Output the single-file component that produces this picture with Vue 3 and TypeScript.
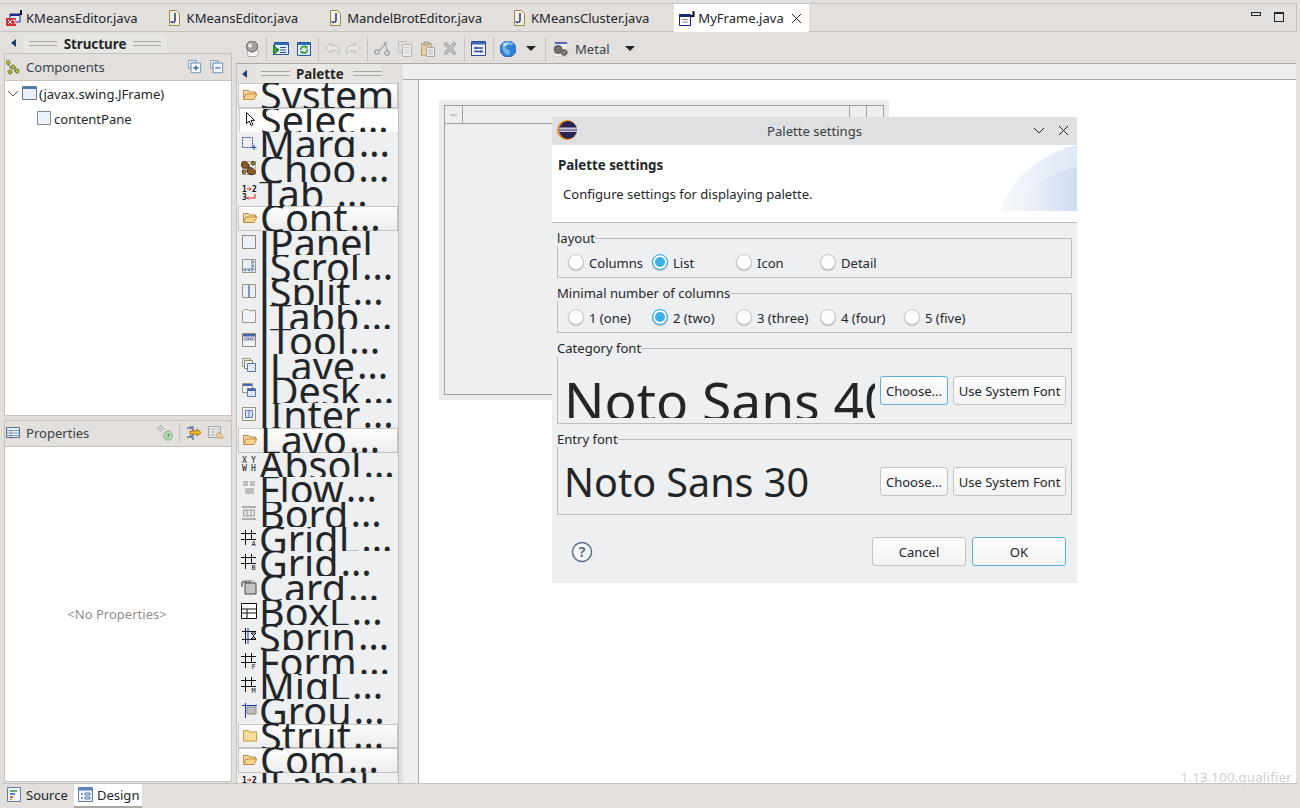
<script setup lang="ts">
import { h } from 'vue'
import type { FunctionalComponent } from 'vue'

type Shape = { d?: string; f?: string; s?: string; w?: number; dash?: string; t?: string; x?: number; y?: number; z?: number; b?: boolean }

const icons: Record<string, Shape[]> = {
  folderOpen: [
    { d: 'M1.5 12V4.5h5l1 1.5h6v2', f: '#f3d9a4', s: '#c08a3a' },
    { d: 'M4 8h11l-3 5.5H1.5z', f: '#fbd48c', s: '#c08a3a' },
  ],
  folder: [{ d: 'M1.5 3.5h5l1 1.5h7v9h-13z', f: '#fcdc98', s: '#c8973f' }],
  arrow: [{ d: 'M4.5 1.5v11l2.7-2.4 2 4.4 1.8-.8-2-4.3h3.5z', f: '#fff', s: '#111' }],
  marquee: [
    { d: 'M1.5 2.5h10v10h-10z', f: 'none', s: '#2848a8', dash: '2 1' },
    { d: 'M13 10v5M10.5 12.5h5', f: 'none', s: '#2848a8' },
  ],
  chooser: [
    { d: 'M1.5 1.5h13v13h-13z', f: '#eee', s: '#a8a88a' },
    { d: 'M0 5c0-3 3-4 5-3s4 3 3 5-7 2-8-2z', f: '#8a5a22', s: '#33230f' },
    { d: 'M6 11c0-3 3-4 5-3s4 3 3 5-7 3-8-2z', f: '#8a5a22', s: '#33230f' },
    { d: 'M12 1.500a1.800 1.800 0 1 0 .1 0zM3 10a1.800 1.800 0 1 0 .1 0z', f: '#b98a2f', s: '#33230f' },
  ],
  tab: [
    { t: '1', x: 1, y: 6.5, f: '#111', b: true },
    { t: '2', x: 11, y: 6.5, f: '#111', b: true },
    { t: '3', x: 1, y: 15, f: '#111', b: true },
    { d: 'M6 4h4M8.5 2.5 10 4 8.5 5.5', f: 'none', s: '#e01818' },
    { d: 'M14 9v4H6M7.5 11.5 6 13l1.5 1.5', f: 'none', s: '#e01818' },
  ],
  panel: [{ d: 'M1.5 1.5h13v13h-13z', f: '#e8eff8', s: '#8d8d7a' }],
  scroll: [
    { d: 'M1.5 1.5h13v13h-13z', f: '#e8eff8', s: '#9a9478' },
    { d: 'M11 2v12M2 11h12', f: 'none', s: '#5b78a8' },
    { d: 'M3 12h2v1H3zM7 12h2v1H7zM12 3h1v2h-1zM12 7h1v2h-1z', f: '#3f63b5' },
  ],
  split: [
    { d: 'M1.5 1.5h13v13h-13z', f: '#e8eff8', s: '#9a9478' },
    { d: 'M8 2v12', f: 'none', s: '#5b78a8', w: 1.5 },
  ],
  tabbed: [{ d: 'M1.5 14.5v-12h1l1-1h4l1 1h6v12z', f: '#eef3fa', s: '#a09a78' }],
  tool: [
    { d: 'M1.5 1.5h13v13h-13z', f: '#eef3fa', s: '#8f8a68' },
    { d: 'M2 2h12v2.5H2z', f: '#3f63b5' },
    { d: 'M2 5h12v4H2z', f: '#c4c6e4' },
    { d: 'M5 7h1M7 7h1M9 7h1M11 7h1', f: 'none', s: '#223' },
  ],
  layered: [
    { d: 'M1.5 1.5h8v8h-8z', f: '#eee', s: '#a09a78' },
    { d: 'M3.5 3.5h8v8h-8z', f: '#eef3fa', s: '#8f8a68' },
    { d: 'M6.5 6.5h8v8h-8z', f: '#dfe8f4', s: '#5b78a8' },
  ],
  desktop: [
    { d: 'M1.5 1.5h10v9h-10z', f: '#eef3fa', s: '#a09a78' },
    { d: 'M2 2h9v2H2z', f: '#3f63b5' },
    { d: 'M6.5 6.5h8v8h-8z', f: '#dfe8f4', s: '#5b78a8' },
    { d: 'M7 7h7v2H7z', f: '#3f63b5' },
  ],
  inter: [
    { d: 'M1.5 1.5h13v13h-13z', f: '#eef3fa', s: '#9a9478' },
    { d: 'M4.5 4.5h7v7h-7zM8 5v6', f: '#dfe8f4', s: '#5b78a8' },
  ],
  absolute: [
    { t: 'X', x: 1, y: 6.5, f: '#111' },
    { t: 'Y', x: 10, y: 6.5, f: '#111' },
    { t: 'W', x: 1, y: 15, f: '#111' },
    { t: 'H', x: 10, y: 15, f: '#111' },
  ],
  flow: [{ d: 'M2 1h5v5H2zM9 1h5v5H9zM4 8h9v6H4z', f: '#bcbcbc' }],
  border: [
    { d: 'M1 2h14M1 14h14', f: 'none', s: '#999', w: 1.5 },
    { d: 'M2.5 5h11v6h-11zM6 5v6M10 5v6', f: '#e6e6e6', s: '#999' },
  ],
  grid: [{ d: 'M4.5 0v15M10.5 0v10M0 3.5h15M0 9.5h15M4.5 15', f: 'none', s: '#111' }],
  card: [
    { d: 'M2.5 1.5h10v11', f: 'none', s: '#aaa' },
    { d: 'M1 8V3h9', f: 'none', s: '#222' },
    { d: 'M4 4h11v11H4z', f: '#c4c4c4', s: '#444' },
  ],
  box: [
    { d: 'M.5 .5h15v15H.5z', f: '#fff', s: '#111' },
    { d: 'M1 6h14M1 10h14M6 6v9', f: 'none', s: '#111' },
  ],
  spring: [
    { d: 'M1 3.5h14M1 11.5h14', f: 'none', s: '#111' },
    { d: 'M4.5 0v16', f: 'none', s: '#111' },
    { d: 'M7 0v16', f: 'none', s: '#1a2ee0' },
    { d: 'M10 5h5l-3 3 3 3h-5l3-3z', f: 'none', s: '#111' },
  ],
  group: [
    { d: 'M1 3.5h15M4.5 1v15', f: 'none', s: '#1a2ee0' },
    { d: 'M6 5h9v7H6z', f: '#bdbdbd', s: '#888' },
  ],
  frame: [
    { d: 'M.5 .5h14v13H.5z', f: '#e8f1fb', s: '#6f7c7d' },
    { d: 'M1 1h13v2H1z', f: '#3f7fc4' },
  ],
  pane: [{ d: 'M.5 .5h13v13H.5z', f: '#ecf2f8', s: '#7f8b95' }],
  java: [
    { d: 'M2.5 .5h7l3 3v12h-10z', f: '#f5f0e0', s: '#94894f' },
    { d: 'M8 3v7c0 3-4 3-4 1', f: 'none', s: '#203a9a', w: 1.5 },
  ],
  xjava: [
    { d: 'M4 4h10v8H4z', f: '#e8eef8', s: '#1a2d8c' },
    { d: 'M4 4h10v2H4z', f: '#1a2d8c' },
    { d: 'M15 5V1h2', f: 'none', s: '#111', w: 2 },
    { d: 'M0 8h10v8H0z', f: '#d83038' },
    { d: 'M2 10l2 2 2-2M2 14l2-2 2 2M7 10h2v4', f: 'none', s: '#fff' },
  ],
  mframe: [
    { d: 'M.5 4.5h11v11H.5z', f: '#fff', s: '#14237c' },
    { d: 'M1 5h10v2H1z', f: '#14237c' },
    { d: 'M3 9.5h6M3 12h6', f: 'none', s: '#888' },
    { d: 'M12 6h2.5V1', f: 'none', s: '#111', w: 2 },
  ],
  comps: [
    { d: 'M2 4l3 6M9 8v5', f: 'none', s: '#666' },
    { d: 'M2 1.5a2 2 0 1 0 .1 0zM7 6a2 2 0 1 0 .1 0zM11 10a2 2 0 1 0 .1 0zM4 11a2 2 0 1 0 .1 0z', f: '#c8b23a', s: '#5a7f2a' },
  ],
  expand: [
    { d: 'M.5 .5h9v3h-6v6h-3z', f: '#e4edf6', s: '#6f94b8' },
    { d: 'M3.5 3.5h11v11h-11z', f: '#f1f6fb', s: '#5f8ab2' },
    { d: 'M6 9h6M9 6v6', f: 'none', s: '#204e86', w: 1.2 },
  ],
  collapse: [
    { d: 'M.5 .5h9v3h-6v6h-3z', f: '#e4edf6', s: '#6f94b8' },
    { d: 'M3.5 3.5h11v11h-11z', f: '#f1f6fb', s: '#5f8ab2' },
    { d: 'M6 9h6', f: 'none', s: '#204e86', w: 1.2 },
  ],
  props: [
    { d: 'M.5 2.5h13v10H.5z', f: '#eef3f8', s: '#506e90' },
    { d: 'M1 5.5h12M1 8h12M1 10.500h12M5 5v7', f: 'none', s: '#7b95b0' },
  ],
  showcat: [
    { d: 'M1 1l5 5M3 0l4 4M0 3l4 4', f: 'none', s: '#98a4a8' },
    { d: 'M11 6a4.500 4.500 0 1 0 .1 0z', f: '#b5d6b5', s: '#86b58c' },
    { d: 'M13 9.500h-2v2h1', f: 'none', s: '#4c9a5c' },
  ],
  pin: [
    { d: 'M1 3h5l-2-2M1 12h5l-2-2', f: 'none', s: '#24447a' },
    { d: 'M7 1v14', f: 'none', s: '#24447a' },
    { d: 'M4 6h7V4l4 3.500-4 3.500V9H4z', f: '#f4c020', s: '#a06f10' },
  ],
  defaults: [
    { d: 'M.5 1.500h12v11H.5z', f: '#eaeaea', s: '#a8a8a8' },
    { d: 'M1 4h11M1 7h11M1 10h7M5 4v8', f: 'none', s: '#c0c0c0' },
    { d: 'M8 10l3-3v2c3 0 4 2 3 5-1-2-2-2-3-2v2z', f: '#f2d9a0', s: '#c8a868' },
  ],
  source: [
    { d: 'M.5 .5h13v14H.5z', f: '#f3f6fa', s: '#5f7fa8' },
    { d: 'M3 4h7', f: 'none', s: '#3d8f48', w: 1.5 },
    { d: 'M3 7h5', f: 'none', s: '#2a5fb0', w: 1.5 },
    { d: 'M3 10h3', f: 'none', s: '#c03030', w: 1.5 },
    { d: 'M3 12.500h2', f: 'none', s: '#d09020', w: 1.5 },
  ],
  design: [
    { d: 'M.5 .5h14v14H.5z', f: '#eff4fb', s: '#5f7fa8' },
    { d: 'M1 1h13v2.500H1z', f: '#5a82c8' },
    { d: 'M3 6h2v2H3zM3 10h2v2H3z', f: '#7a9ac8' },
    { d: 'M7 6h5v2H7zM7 10h5v2H7z', f: '#dbe6f5', s: '#5f7fa8' },
  ],
  tip: [
    { d: 'M3 8h10l1.500 4-2 3.500H4z', f: '#f4f4f0', s: '#b0b0a8' },
    { d: 'M8 0a5.500 5.500 0 1 0 .1 0z', f: '#a2a2a2', s: '#5c5c5c' },
    { d: 'M6 2.500a2 2 0 1 0 .1 0z', f: '#ececec' },
  ],
  testrun: [
    { d: 'M1.500 1.500h14v12h-14z', f: '#e6edf7', s: '#1f5a9e' },
    { d: 'M2 2h13v2H2z', f: '#2f6fb8' },
    { d: 'M7 6.500h6M7 9h6M7 11.500h6', f: 'none', s: '#1f5a9e' },
    { d: 'M0 4l6 5-6 5z', f: '#2f9a3c', s: '#1c6d28' },
  ],
  refresh: [
    { d: 'M1.500 1.500h13v13h-13z', f: '#e6edf7', s: '#1f5a9e' },
    { d: 'M2 2h12v2H2z', f: '#2f6fb8' },
    { d: 'M4.500 9a3.500 3.500 0 0 1 6-2.500M11.500 8.500a3.500 3.500 0 0 1-6 2.500', f: 'none', s: '#2f9a3c', w: 1.600 },
    { d: 'M11.500 4.500v3h-3zM4.500 13v-3h3z', f: '#2f9a3c' },
  ],
  undo: [{ d: 'M6 1.500 .5 7 6 12.500V9.500h3c3 0 4.500 1.500 5 3 1.500-4 0-8-5-8H6z', f: '#e8e6e4', s: '#bdbbb7' }],
  redo: [{ d: 'M10 1.500 15.500 7 10 12.500V9.500H7c-3 0-4.500 1.500-5 3-1.500-4 0-8 5-8h3z', f: '#e8e6e4', s: '#bdbbb7' }],
  cut: [
    { d: 'M13 1 5 10M10 1l4 9', f: 'none', s: '#a5a5a5', w: 1.200 },
    { d: 'M3 9a2.200 2.200 0 1 0 .1 0zM13 10a2.200 2.200 0 1 0 .1 0z', f: '#e2dfdc', s: '#a5a5a5', w: 1.400 },
  ],
  copy: [
    { d: 'M1.500 .5h8v11h-8z', f: '#dedede', s: '#c0c0c0' },
    { d: 'M5.500 3.500h9v12h-9z', f: '#ededed', s: '#b4b4b4' },
    { d: 'M7.500 6.500h5M7.500 9h5M7.500 11.500h5', f: 'none', s: '#c4c4c4' },
  ],
  paste: [
    { d: 'M1.500 2.500h10v12h-10z', f: '#e8cfa4', s: '#b8a27a' },
    { d: 'M4 1h5v3H4z', f: '#c8c4b8', s: '#a09a88' },
    { d: 'M6.500 6.500h8v9h-8z', f: '#eee', s: '#aaa' },
    { d: 'M8 9h5M8 11h5M8 13h5', f: 'none', s: '#bbb' },
  ],
  del: [{ d: 'M2 3l2-2 4 4 4-4 2 2-4 4.500 4 4.500-2 2-4-4-4 4-2-2 4-4.500z', f: '#bdbdbd', s: '#a8a8a8' }],
  form: [
    { d: 'M.5 .5h14v14H.5z', f: '#f1f5fb', s: '#294e97' },
    { d: 'M1 1h13v2.500H1z', f: '#3f63b5' },
    { d: 'M3 7h9M3 10.500h9', f: 'none', s: '#294e97', w: 1.400 },
    { d: 'M5 5.500v3M10 9v3', f: 'none', s: '#294e97' },
  ],
  globe: [
    { d: 'M8 0a8 8 0 1 0 .1 0z', f: '#2f7fd0', s: '#2a6cb5' },
    { d: 'M3 2c3-2 7-2 10 0 1 2-2 3-4 2S5 5 6 7s3 1 4 3-1 4-3 4C3 12 1 6 3 2z', f: '#6fb2ec' },
    { d: 'M4 3c1-1 3-1 4-.5S6 5 4.500 5 3 4 4 3z', f: '#d7ecfb' },
  ],
  look: [
    { d: 'M2.500 .5h13v15h-13z', f: '#eeeeee', s: '#d8d8d8' },
    { d: 'M3 1h12v2H3z', f: '#5a62b8' },
    { d: 'M6 5a3.500 3.500 0 1 0 .1 0z', f: '#777', s: '#666', w: 2 },
    { d: 'M12 9a2.500 2.500 0 1 0 .1 0z', f: '#888', s: '#6a6a6a', w: 2 },
  ],
}
;(['A', 'B', 'F', 'M'] as const).forEach((c) => {
  icons['grid' + c] = [...icons.grid, { t: c, x: 10.5, y: 16, f: '#111', z: 7 }]
})

const Ico: FunctionalComponent<{ n: string; size?: number }> = (props) =>
  h(
    'svg',
    { class: 'ico', width: props.size ?? 16, height: props.size ?? 16, viewBox: '0 0 16 16' },
    (icons[props.n] ?? []).map((p) =>
      p.t
        ? h('text', { x: p.x, y: p.y, fill: p.f, 'font-size': p.z ?? 8, 'font-family': 'DejaVu Sans Mono, monospace', 'font-weight': p.b ? 700 : 400 }, p.t)
        : h('path', { d: p.d, fill: p.f ?? 'none', stroke: p.s ?? 'none', 'stroke-width': p.w ?? 1, 'stroke-dasharray': p.dash }),
    ),
  )

const tabs = [
  { icon: 'xjava', text: 'KMeansEditor.java', cls: 't1' },
  { icon: 'java', text: 'KMeansEditor.java', cls: 't2' },
  { icon: 'java', text: 'MandelBrotEditor.java', cls: 't2' },
  { icon: 'java', text: 'KMeansCluster.java', cls: 't2' },
]

type Row = { icon: string; text: string; more?: boolean; cat?: boolean; sel?: boolean }
const rows: Row[] = [
  { icon: 'folderOpen', text: 'System', cat: true },
  { icon: 'arrow', text: 'Selec', more: true, sel: true },
  { icon: 'marquee', text: 'Marq', more: true },
  { icon: 'chooser', text: 'Choo', more: true },
  { icon: 'tab', text: 'Tab ', more: true },
  { icon: 'folderOpen', text: 'Cont', more: true, cat: true },
  { icon: 'panel', text: 'JPanel' },
  { icon: 'scroll', text: 'JScrol', more: true },
  { icon: 'split', text: 'JSplit', more: true },
  { icon: 'tabbed', text: 'JTabb', more: true },
  { icon: 'tool', text: 'JTool', more: true },
  { icon: 'layered', text: 'JLaye', more: true },
  { icon: 'desktop', text: 'JDesk', more: true },
  { icon: 'inter', text: 'JInter', more: true },
  { icon: 'folderOpen', text: 'Layo', more: true, cat: true },
  { icon: 'absolute', text: 'Absol', more: true },
  { icon: 'flow', text: 'Flow', more: true },
  { icon: 'border', text: 'Bord', more: true },
  { icon: 'gridA', text: 'GridL', more: true },
  { icon: 'gridB', text: 'Grid', more: true },
  { icon: 'card', text: 'Card', more: true },
  { icon: 'box', text: 'BoxL', more: true },
  { icon: 'spring', text: 'Sprin', more: true },
  { icon: 'gridF', text: 'Form', more: true },
  { icon: 'gridM', text: 'MigL', more: true },
  { icon: 'group', text: 'Grou', more: true },
  { icon: 'folder', text: 'Strut', more: true, cat: true },
  { icon: 'folderOpen', text: 'Com', more: true, cat: true },
  { icon: 'tab', text: 'JLabel' },
]

const layouts = [
  { label: 'Columns', on: false },
  { label: 'List', on: true },
  { label: 'Icon', on: false },
  { label: 'Detail', on: false },
]
const columns = [
  { label: '1 (one)', on: false },
  { label: '2 (two)', on: true },
  { label: '3 (three)', on: false },
  { label: '4 (four)', on: false },
  { label: '5 (five)', on: false },
]
</script>

<template>
  <div class="app">
    <div class="tabs">
      <div v-for="t in tabs" :key="t.text + t.cls" class="tab" :class="t.cls">
        <Ico :n="t.icon" />
        <span>{{ t.text }}</span>
      </div>
      <div class="tab active">
        <Ico n="mframe" />
        <span>MyFrame.java</span>
        <svg class="close" width="11" height="11" viewBox="0 0 11 11"><path d="M1 1l9 9M10 1l-9 9" stroke="#232629" fill="none" /></svg>
      </div>
      <div class="winbtns">
        <span class="minb"></span>
        <span class="maxb"></span>
      </div>
    </div>

    <div class="main">
      <aside class="left">
        <div class="phead">
          <span class="tri"></span>
          <div class="band sband">
            <span class="grip"></span>
            <b>Structure</b>
            <span class="grip"></span>
          </div>
        </div>
        <section class="view comps">
          <header class="vhead">
            <Ico n="comps" />
            <span class="vtitle">Components</span>
            <span class="vbtns">
              <Ico n="expand" :size="14" />
              <Ico n="collapse" :size="14" />
            </span>
          </header>
          <div class="tree">
            <div class="node">
              <svg class="chev" width="12" height="8" viewBox="0 0 12 8"><path d="M1 1l5 5 5-5" stroke="#555" fill="none" /></svg>
              <Ico n="frame" />
              <span>(javax.swing.JFrame)</span>
            </div>
            <div class="node sub">
              <Ico n="pane" />
              <span>contentPane</span>
            </div>
          </div>
        </section>
        <section class="view propsv">
          <header class="vhead">
            <Ico n="props" />
            <span class="vtitle">Properties</span>
            <span class="vbtns pbtns">
              <Ico n="showcat" />
              <i class="sep"></i>
              <Ico n="pin" />
              <Ico n="defaults" />
            </span>
          </header>
          <div class="noprops">&lt;No Properties&gt;</div>
        </section>
      </aside>

      <div class="right">
        <div class="toolbar">
          <Ico n="tip" class="tb first" />
          <i class="tsep"></i>
          <Ico n="testrun" class="tb" />
          <Ico n="refresh" class="tb g7" />
          <i class="tsep"></i>
          <Ico n="undo" class="tb" />
          <Ico n="redo" class="tb g4" />
          <i class="tsep"></i>
          <Ico n="cut" class="tb" />
          <Ico n="copy" class="tb g7" />
          <Ico n="paste" class="tb g7" />
          <Ico n="del" class="tb g6" />
          <i class="tsep"></i>
          <Ico n="form" class="tb" />
          <i class="tsep s2"></i>
          <Ico n="globe" class="tb" />
          <i class="drop"></i>
          <i class="tsep s3"></i>
          <Ico n="look" class="tb" />
          <span class="metal">Metal</span>
          <i class="drop d2"></i>
        </div>

        <div class="work">
          <div class="palette">
            <div class="phead pal">
              <span class="tri"></span>
              <div class="band pband">
                <span class="grip"></span>
                <b>Palette</b>
                <span class="grip"></span>
              </div>
            </div>
            <div class="plist">
              <div v-for="r in rows" :key="r.text + r.icon" class="prow" :class="{ cat: r.cat, sel: r.sel }">
                <Ico :n="r.icon" class="picon" />
                <span class="ptext">{{ r.text }}<span v-if="r.more" class="dots">…</span></span>
              </div>
            </div>
          </div>
          <div class="editor">
            <div class="rtop"></div>
            <div class="erow">
              <div class="rleft"></div>
              <div class="canvas">
                <div class="jframe">
                  <div class="jinner">
                    <div class="jtitle">
                      <span class="jmin"><i></i></span>
                      <span class="jfill"></span>
                      <span class="jbtn"></span>
                      <span class="jbtn"></span>
                    </div>
                  </div>
                </div>
                <span class="version">1.13.100.qualifier</span>
              </div>
            </div>
          </div>
        </div>
      </div>
    </div>

    <div class="bottom">
      <div class="btab">
        <Ico n="source" />
        <span>Source</span>
      </div>
      <div class="btab on">
        <Ico n="design" />
        <span>Design</span>
      </div>
    </div>

    <div class="dialog">
      <div class="dtitle">
        <svg class="dlogo" width="22" height="22" viewBox="0 0 22 22">
          <circle cx="11" cy="11" r="10" fill="#f29111" />
          <circle cx="12" cy="11" r="9" fill="#2c2255" />
          <path d="M3 8.500h18v1.500H3zM3 11.500h18v1.500H3z" fill="#c8c6dc" />
          <path d="M3.500 10h17v1.500h-17z" fill="#8c88b0" />
        </svg>
        <span class="dname">Palette settings</span>
        <svg class="dbtn b1" width="12" height="8" viewBox="0 0 12 8"><path d="M1 1l5 5 5-5" stroke="#232629" fill="none" /></svg>
        <svg class="dbtn b2" width="11" height="11" viewBox="0 0 11 11"><path d="M1 1l9 9M10 1l-9 9" stroke="#232629" fill="none" /></svg>
      </div>
      <div class="dhead">
        <div class="dhtext">
          <b>Palette settings</b>
          <p>Configure settings for displaying palette.</p>
        </div>
        <svg class="ddeco" width="77" height="66" viewBox="0 0 77 66">
          <defs>
            <linearGradient id="d1" x1="0" y1="0" x2="1" y2="0">
              <stop offset="0" stop-color="#f6f8fc" />
              <stop offset="1" stop-color="#dfe8f7" />
            </linearGradient>
            <linearGradient id="d2" x1="0" y1="0" x2="1" y2="0">
              <stop offset="0" stop-color="#f3f6fc" />
              <stop offset="1" stop-color="#cfdbf3" />
            </linearGradient>
          </defs>
          <path d="M0 66C8 36 40 8 77 0v66z" fill="url(#d1)" />
          <path d="M17 66C25 44 50 27 77 22v44z" fill="url(#d2)" />
        </svg>
      </div>
      <div class="dbody">
        <fieldset class="grp">
          <legend>layout</legend>
          <div class="radios">
            <label v-for="o in layouts" :key="o.label" class="radio">
              <i class="dot" :class="{ on: o.on }"></i><span>{{ o.label }}</span>
            </label>
          </div>
        </fieldset>
        <fieldset class="grp">
          <legend>Minimal number of columns</legend>
          <div class="radios">
            <label v-for="o in columns" :key="o.label" class="radio">
              <i class="dot" :class="{ on: o.on }"></i><span>{{ o.label }}</span>
            </label>
          </div>
        </fieldset>
        <fieldset class="grp font">
          <legend>Category font</legend>
          <div class="frow">
            <div class="preview big"><span>Noto Sans 40</span></div>
            <button class="btn focus">Choose...</button>
            <button class="btn sys">Use System Font</button>
          </div>
        </fieldset>
        <fieldset class="grp font">
          <legend>Entry font</legend>
          <div class="frow">
            <div class="preview mid"><span>Noto Sans 30</span></div>
            <button class="btn">Choose...</button>
            <button class="btn sys">Use System Font</button>
          </div>
        </fieldset>
        <div class="dfoot">
          <svg class="help" width="22" height="22" viewBox="0 0 22 22">
            <circle cx="11" cy="11" r="9.500" fill="#f4f6f8" stroke="#5d6f8c" stroke-width="1.500" />
            <text x="11" y="16" text-anchor="middle" font-size="14" font-weight="700" font-family="Noto Sans, sans-serif" fill="#5d6f8c">?</text>
          </svg>
          <button class="btn wide">Cancel</button>
          <button class="btn wide focus">OK</button>
        </div>
      </div>
    </div>
  </div>
</template>

<style>
html,
body {
  margin: 0;
  overflow: hidden;
}
</style>

<style scoped>
.app {
  position: relative;
  width: 1300px;
  height: 808px;
  overflow: hidden;
  display: flex;
  flex-direction: column;
  background: #e2dfdc;
  color: #232629;
  font: 13.05px/18px 'Noto Sans', sans-serif;
}
.ico {
  display: block;
  flex: none;
}

/* editor tabs */
.tabs {
  flex: none;
  box-sizing: border-box;
  height: 29px;
  margin-top: 3px;
  margin-right: 3px;
  border-top: 1px solid #c6c3be;
  border-bottom: 1px solid #c6c3be;
  border-right: 1px solid #c6c3be;
  display: flex;
  align-items: stretch;
}
.tab {
  display: flex;
  align-items: center;
  white-space: nowrap;
  gap: 3.5px;
}
.tab.t1 {
  padding-left: 6px;
  padding-right: 29.5px;
  gap: 4px;
}
.tab.t2 {
  padding-right: 29.5px;
}
.tab.active {
  background: #fff;
  margin-left: -4.5px;
  padding: 0 7px 0 5px;
  gap: 3px;
  margin-bottom: -1px;
}
.close {
  margin-left: 4px;
}
.winbtns {
  margin-left: auto;
  display: flex;
  gap: 13px;
  padding-right: 12px;
  padding-top: 8px;
}
.minb {
  box-sizing: border-box;
  width: 10px;
  height: 4px;
  border: 1px solid #232629;
}
.maxb {
  box-sizing: border-box;
  width: 10px;
  height: 10px;
  border: 1px solid #232629;
  border-top-width: 2px;
}

.main {
  flex: 1;
  min-height: 0;
  display: flex;
}

/* left column */
.left {
  width: 228px;
  margin-left: 4px;
  flex: none;
  display: flex;
  flex-direction: column;
}
.phead {
  height: 21px;
  flex: none;
  display: flex;
  align-items: center;
}
.tri {
  width: 0;
  height: 0;
  margin-left: 7px;
  border-style: solid;
  border-width: 4px 5px 4px 0;
  border-color: transparent #1d3d73 transparent transparent;
}
.band {
  height: 19px;
  margin-top: 2px;
  background: #e8e6e3;
  display: flex;
  align-items: center;
  justify-content: center;
  gap: 7px;
  font-size: 13.33px;
}
.sband {
  margin-left: 7px;
  width: 144px;
}
.grip {
  width: 28px;
  height: 3px;
  border-top: 1px solid #a8a6a2;
  border-bottom: 1px solid #a8a6a2;
}
.view {
  box-sizing: border-box;
  border: 1px solid #c6c3be;
  display: flex;
  flex-direction: column;
}
.comps {
  height: 363px;
}
.propsv {
  height: 362px;
  margin-top: 4px;
}
.vhead {
  flex: none;
  box-sizing: border-box;
  height: 27px;
  padding-left: 1px;
  display: flex;
  align-items: center;
  border-bottom: 1px solid #c6c3be;
}
.propsv .vhead {
  height: 26px;
  padding-bottom: 2px;
}
.vtitle {
  margin-left: 4px;
  color: #3a4148;
}
.vbtns {
  margin-left: auto;
  display: flex;
  gap: 8px;
  padding-right: 7px;
}
.pbtns {
  align-items: center;
  gap: 6px;
}
.sep {
  width: 1px;
  height: 20px;
  background: #c6c3be;
}
.tree {
  flex: 1;
  background: #fff;
  padding-top: 0;
}
.node {
  height: 25px;
  display: flex;
  align-items: center;
  gap: 1px;
  white-space: nowrap;
  padding-left: 2px;
}
.chev {
  margin-right: 2px;
}
.node.sub {
  padding-left: 32px;
}
.noprops {
  flex: 1;
  background: #fff;
  display: flex;
  align-items: center;
  justify-content: center;
  color: #8f8f8f;
  padding-right: 2px;
}

/* right side */
.right {
  flex: none;
  width: 1060px;
  margin-left: 4px;
  display: flex;
  flex-direction: column;
}
.toolbar {
  flex: none;
  box-sizing: border-box;
  height: 32px;
  padding-top: 2px;
  border-bottom: 1px solid #aaa9a6;
  display: flex;
  align-items: center;
}
.first {
  margin-left: 8px;
}
.g7 {
  margin-left: 7px;
}
.g6 {
  margin-left: 6px;
}
.g4 {
  margin-left: 4px;
}
.tsep {
  width: 1px;
  height: 24px;
  background: #c6c3be;
  margin: 0 6px;
}
.tsep.s3 {
  margin-left: 7px;
}
.drop {
  width: 0;
  height: 0;
  margin-left: 10px;
  margin-right: 2px;
  border-style: solid;
  border-width: 5px 5px 0;
  border-color: #232629 transparent transparent;
}
.drop.d2 {
  margin-left: 15px;
}
.metal {
  margin-left: 7px;
  color: #3a4148;
}
.work {
  flex: 1;
  min-height: 0;
  display: flex;
}
.palette {
  box-sizing: border-box;
  flex: none;
  width: 167px;
  display: flex;
  flex-direction: column;
  border-left: 1px solid #c6c3be;
  padding-right: 4px;
  position: relative;
}
.phead.pal {
  height: 19px;
}
.pal .tri {
  margin-left: 5px;
}
.pband {
  margin-left: 9px;
  width: 126px;
  margin-top: 0;
  gap: 6px;
  justify-content: flex-start;
  padding-left: 5px;
  box-sizing: border-box;
}
.pband .grip {
  width: 29px;
}
.pband b {
  margin-right: 3px;
}
.plist {
  flex: 1;
  min-height: 0;
  overflow: hidden;
  background: #eeeff1;
  border-right: 1px solid #bdbab6;
}
.prow {
  box-sizing: border-box;
  height: 24.65px;
  overflow: hidden;
  display: flex;
  align-items: flex-start;
  font-size: 39.5px;
  line-height: 40px;
  white-space: pre;
}
.picon {
  margin: 3px 2px 0 4px;
}
.ptext {
  margin-top: -8px;
  font-size: 39.5px;
}
.dots {
  display: inline-block;
  margin-left: 2px;
  transform: translateY(-2px);
}
.prow.sel {
  background: #fff;
  margin-left: 2px;
  border-left: 1px solid #ccc;
  border-top: 1px solid #ccc;
}
.prow.sel .picon {
  margin: 2px 2px 0 2px;
}
.prow.sel .ptext {
  margin-top: -9px;
}
.prow.cat {
  background: linear-gradient(#fff, #ebebeb);
  margin-left: 1px;
  box-shadow: inset 0 0 0 1px #c4c4c4;
}
.editor {
  flex: 1;
  min-width: 0;
  display: flex;
  flex-direction: column;
}
.rtop {
  flex: none;
  height: 15px;
  background: #eeeff1;
  border-bottom: 1px solid #aaa9a6;
}
.erow {
  flex: 1;
  min-height: 0;
  display: flex;
}
.rleft {
  flex: none;
  width: 15px;
  background: #eeeff1;
  border-right: 1px solid #aaa9a6;
}
.canvas {
  flex: 1;
  position: relative;
  background: #fff;
}
.jframe {
  position: absolute;
  left: 20px;
  top: 20px;
  box-sizing: border-box;
  width: 450px;
  height: 300px;
  padding: 5px;
  background: #ececec;
}
.jinner {
  height: 100%;
  box-sizing: border-box;
  border: 1px solid #a0a0a0;
  background: #eeeeee;
}
.jtitle {
  display: flex;
  height: 17px;
  border-bottom: 1px solid #a0a0a0;
}
.jmin {
  width: 17px;
  border-right: 1px solid #a0a0a0;
  display: flex;
  align-items: center;
  justify-content: center;
}
.jmin i {
  width: 7px;
  height: 2px;
  background: #c8c8c8;
}
.jfill {
  flex: 1;
}
.jbtn {
  width: 16px;
  border-left: 1px solid #a0a0a0;
}
.version {
  position: absolute;
  right: 4px;
  bottom: -3px;
  color: #cfcfcf;
  font-size: 13.05px;
  letter-spacing: 0.3px;
}

/* bottom tabs */
.bottom {
  flex: none;
  box-sizing: border-box;
  height: 25px;
  border-top: 1px solid #c6c3be;
  display: flex;
  padding-left: 5px;
  margin-left: 2px;
  margin-right: 3px;
}
.btab {
  display: flex;
  align-items: center;
  gap: 3px;
  height: 22px;
  padding-right: 6px;
}
.btab.on {
  background: #fff;
  padding: 0 3px 0 4px;
  gap: 3px;
  box-shadow: 0 2px 0 #aaa9a6;
}

/* dialog */
.dialog {
  position: absolute;
  left: 552px;
  top: 117px;
  width: 525px;
  height: 466px;
  background: #eeeff1;
  display: flex;
  flex-direction: column;
}
.dtitle {
  position: relative;
  flex: none;
  height: 28px;
  background: #dfe0e2;
  display: flex;
  align-items: center;
  justify-content: center;
  color: #3a3f44;
}
.dlogo {
  position: absolute;
  left: 4px;
  top: 2px;
}
.dbtn {
  position: absolute;
}
.dbtn.b1 {
  left: 481px;
  top: 10px;
}
.dbtn.b2 {
  left: 506px;
  top: 8px;
}
.dhead {
  flex: none;
  box-sizing: border-box;
  height: 78px;
  background: #fff;
  border-bottom: 1px solid #bdbdbd;
  display: flex;
  justify-content: space-between;
  align-items: flex-start;
}
.dhtext {
  padding: 11px 0 0 6px;
}
.dhtext b {
  display: block;
  font-size: 13.33px;
}
.dhtext p {
  margin: 11px 0 0 5px;
}
.dbody {
  flex: 1;
  padding: 7px 5px 0;
  display: flex;
  flex-direction: column;
  gap: 7px;
}
.grp {
  margin: 0;
  min-width: 0;
  padding: 0 0 0 10px;
  border: 1px solid #bdbdbd;
  height: 48px;
  box-sizing: border-box;
}
.grp legend {
  padding: 0;
  margin-left: -11px;
  line-height: 16px;
  color: #232629;
}
.grp.font {
  height: 84px;
  padding-left: 3px;
}
.grp.font legend {
  margin-left: -4px;
}
.radios {
  display: grid;
  grid-template-columns: repeat(5, 84px);
  padding-top: 7px;
}
.radio {
  display: flex;
  align-items: center;
  gap: 5px;
  white-space: nowrap;
  height: 18px;
}
.radio span {
  padding-top: 2px;
}
.dot {
  box-sizing: border-box;
  width: 16px;
  height: 16px;
  flex: none;
  border-radius: 50%;
  background: #fcfcfc;
  border: 1px solid #c8c8c8;
  box-shadow: 0 1px 1px #bbb;
}
.dot.on {
  border-color: #3daee9;
  background: #3daee9;
  box-shadow: inset 0 0 0 2px #fff, 0 1px 1px #bbb;
}
.frow {
  display: flex;
  align-items: flex-start;
}
.preview {
  flex: none;
  box-sizing: border-box;
  width: 314px;
  padding-left: 3px;
  overflow: hidden;
  white-space: nowrap;
}
.preview.big {
  margin-top: 10px;
  height: 52px;
  font-size: 53.3px;
  line-height: 70px;
}
.preview.mid {
  margin-top: 10px;
  height: 50px;
  font-size: 39.5px;
  line-height: 50px;
}
.btn {
  box-sizing: border-box;
  flex: none;
  height: 29px;
  width: 68px;
  margin: 20px 0 0 5px;
  padding: 0;
  background: linear-gradient(#fdfdfd, #f3f3f4);
  border: 1px solid #c4c4c4;
  border-radius: 3px;
  color: #232629;
  font: inherit;
}
.btn.sys {
  width: 113px;
}
.btn.focus {
  border-color: #5fb0e0;
}
.dfoot {
  margin-top: 15px;
  display: flex;
  align-items: center;
  padding-right: 6px;
}
.help {
  margin-left: 14px;
  margin-right: auto;
}
.btn.wide {
  width: 94px;
  margin: 0 0 0 6px;
}
</style>
